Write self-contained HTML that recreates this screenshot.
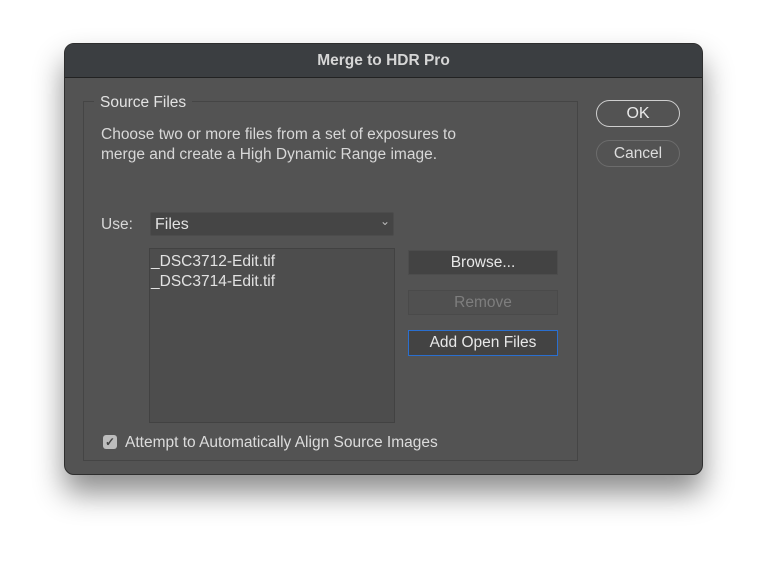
<!DOCTYPE html>
<html><head><style>
body{margin:0;width:768px;height:561px;background:#fff;font-family:"Liberation Sans",sans-serif;position:relative;overflow:hidden}
.dlg{position:absolute;left:64px;top:43px;width:639px;height:432px;background:#535353;border-radius:10px;box-shadow:0 18px 30px rgba(0,0,0,.45);overflow:hidden;border:1px solid #2e2e2e;box-sizing:border-box}
.title{height:33px;background:#3b3e41;border-bottom:1px solid #222;color:#d6d6d6;font-weight:bold;font-size:15.5px;text-align:center;line-height:33px}
.a{position:absolute;color:#e2e2e2;font-size:15.5px}
.grp{position:absolute;left:83px;top:101px;width:495px;height:360px;border:1px solid #454545;box-sizing:border-box}
.btn{position:absolute;box-sizing:border-box;text-align:center;color:#e8e8e8;font-size:15.5px}
</style></head><body>
<div class="dlg"><div class="title">Merge to HDR Pro</div></div>
<div class="grp"></div>
<div class="a" style="left:94px;top:94px;background:#535353;padding:0 6px">Source Files</div>
<div class="a" style="left:101px;top:125px;line-height:20px;color:#d8d8d8">Choose two or more files from a set of exposures to<br>merge and create a High Dynamic Range image.</div>
<div class="a" style="left:101px;top:216px;color:#d8d8d8">Use:</div>
<div style="position:absolute;left:150px;top:212px;width:244px;height:24px;background:#454545;border:1px solid #4c4c4c;box-sizing:border-box;border-radius:2px"></div>
<div class="a" style="left:155px;top:216px;font-size:16px">Files</div>
<div class="a" style="left:380px;top:214px;font-size:12px;color:#bbb">&#8964;</div>
<div style="position:absolute;left:149px;top:248px;width:246px;height:175px;background:#4d4d4d;border:1px solid #424242;box-sizing:border-box"></div>
<div class="a" style="left:151px;top:252px;line-height:20px">_DSC3712-Edit.tif<br>_DSC3714-Edit.tif</div>
<div class="btn" style="left:408px;top:250px;width:150px;height:25px;background:#434343;border:1px solid #4d4d4d;line-height:23px">Browse...</div>
<div class="btn" style="left:408px;top:290px;width:150px;height:25px;background:#505050;border:1px solid #4a4a4a;line-height:23px;color:#7e7e7e">Remove</div>
<div class="btn" style="left:408px;top:330px;width:150px;height:26px;background:#434343;border:1px solid #2a6fd0;line-height:24px">Add Open Files</div>
<div class="btn" style="left:596px;top:100px;width:84px;height:27px;border:1.5px solid #cfcfcf;border-radius:14px;line-height:25px;font-size:16px">OK</div>
<div class="btn" style="left:596px;top:140px;width:84px;height:27px;border:1px solid #6c6c6c;border-radius:14px;line-height:26px;color:#ddd">Cancel</div>
<div style="position:absolute;left:103px;top:435px;width:14px;height:14px;background:#bdbdbd;border-radius:3px;color:#444;font-size:12px;line-height:14px;text-align:center;font-weight:bold">✓</div>
<div class="a" style="left:125px;top:434px;color:#dcdcdc">Attempt to Automatically Align Source Images</div>
</body></html>
